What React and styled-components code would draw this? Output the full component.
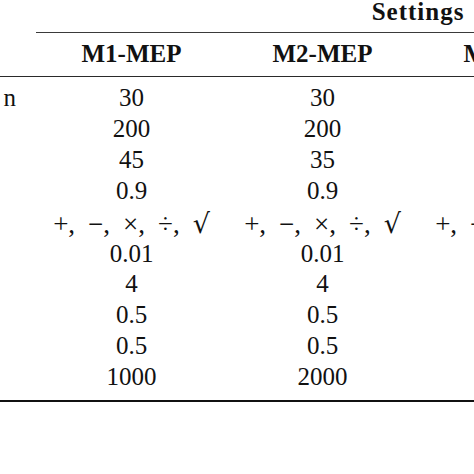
import React from 'react';
import styled, {createGlobalStyle} from 'styled-components';

const GlobalStyle = createGlobalStyle`
  html, body {
    margin: 0;
    padding: 0;
    background: #ffffff;
    overflow: hidden;
  }
  body {
    font-family: "Liberation Serif", "Times New Roman", serif;
    color: #111;
  }
`;

const LABEL_W = 36;
const COL_W = 191;

const Viewport = styled.div`
  width: 474px;
  height: 474px;
  overflow: hidden;
  background: #fff;
`;

const Table = styled.table`
  border-collapse: collapse;
  table-layout: fixed;
  width: ${LABEL_W + COL_W * 4}px;
  font-size: 25px;
`;

const GroupHead = styled.th`
  font-weight: 700;
  font-size: 25px;
  letter-spacing: 1px;
  line-height: 22px;
  height: 22px;
  padding: 1px 0 9px 0;
  text-align: center;
  border-bottom: 1.5px solid #3a3a3a;
`;

const ColHead = styled.th`
  font-weight: 700;
  font-size: 25px;
  line-height: 28px;
  padding: 7px 0 8px 0;
  text-align: center;
  white-space: nowrap;
  border-bottom: 1px solid #2a2a2a;
`;

const Blank = styled.th`
  padding: 0;
  border-bottom: ${p => (p.$rule ? '1px solid #2a2a2a' : 'none')};
`;

const Row = styled.tr`
  & > td {
    padding-top: ${p => (p.$first ? 6 : 0)}px;
    padding-bottom: ${p => (p.$last ? 7 : 0)}px;
    border-bottom: ${p => (p.$last ? '2px solid #111' : 'none')};
  }
`;

const Cell = styled.td`
  line-height: 30.9px;
  text-align: center;
  white-space: nowrap;
`;

const LabelCell = styled.td`
  padding: 0;
  line-height: 30.9px;
`;

const Label = styled.div`
  display: flex;
  justify-content: flex-end;
  overflow: hidden;
  width: ${LABEL_W}px;
  padding-right: 20px;
  box-sizing: border-box;
  white-space: nowrap;
  clip-path: inset(0 0 0 3px);
`;

const OpList = styled.span`
  display: inline-flex;
  align-items: baseline;
  justify-content: center;
  gap: 13px;
  position: relative;
  top: 2px;
`;

const Op = styled.span`
  font-size: 27px;
`;

const Root = styled.span`
  font-family: "DejaVu Serif", "Liberation Serif", serif;
  font-size: 27px;
  font-weight: 300;
`;

const ops = ['+,', '−,', '×,', '÷,'];

const rows = [
  {label: 'Population', values: ['30', '30', '30', '30']},
  {values: ['200', '200', '200', '200']},
  {values: ['45', '35', '40', '50']},
  {values: ['0.9', '0.9', '0.9', '0.9']},
  {ops: true},
  {values: ['0.01', '0.01', '0.01', '0.01']},
  {values: ['4', '4', '4', '4']},
  {values: ['0.5', '0.5', '0.5', '0.5']},
  {values: ['0.5', '0.5', '0.5', '0.5']},
  {values: ['1000', '2000', '3000', '4000']}
];

const heads = ['M1-MEP', 'M2-MEP', 'M3-MEP', 'M4-MEP'];

function OpSet() {
  return (
    <OpList>
      {ops.map(o => (
        <Op key={o}>{o}</Op>
      ))}
      <Root>√</Root>
    </OpList>
  );
}

export default function App() {
  return (
    <Viewport>
      <GlobalStyle />
      <Table>
        <colgroup>
          <col style={{width: LABEL_W}} />
          {heads.map(h => (
            <col key={h} style={{width: COL_W}} />
          ))}
        </colgroup>
        <thead>
          <tr>
            <Blank />
            <GroupHead colSpan={4}>Settings</GroupHead>
          </tr>
          <tr>
            <Blank $rule />
            {heads.map(h => (
              <ColHead key={h}>{h}</ColHead>
            ))}
          </tr>
        </thead>
        <tbody>
          {rows.map((r, i) => (
            <Row key={i} $first={i === 0} $last={i === rows.length - 1}>
              <LabelCell>
                <Label>{r.label || ''}</Label>
              </LabelCell>
              {r.ops
                ? heads.map(h => (
                    <Cell key={h}>
                      <OpSet />
                    </Cell>
                  ))
                : r.values.map((v, j) => <Cell key={j}>{v}</Cell>)}
            </Row>
          ))}
        </tbody>
      </Table>
    </Viewport>
  );
}
